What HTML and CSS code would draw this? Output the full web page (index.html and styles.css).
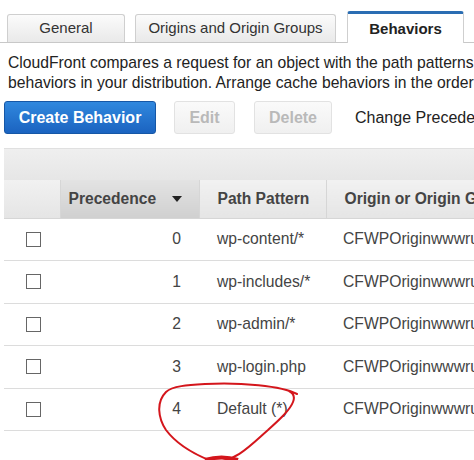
FILE: index.html
```html
<!DOCTYPE html>
<html>
<head>
<meta charset="utf-8">
<link rel="stylesheet" href="styles.css">
</head>
<body>
<div class="page">
  <div class="tabs">
    <div class="tab tab-general">General</div>
    <div class="tab tab-origins">Origins and Origin Groups</div>
    <div class="tab tab-active">Behaviors</div>
  </div>
  <p class="intro">CloudFront compares a request for an object with the path patterns in your cache<br>behaviors in your distribution. Arrange cache behaviors in the order in which you want CloudFront to evaluate them.</p>
  <div class="toolbar">
    <button class="btn btn-primary">Create Behavior</button>
    <button class="btn btn-disabled btn-edit">Edit</button>
    <button class="btn btn-disabled btn-delete">Delete</button>
    <span class="change">Change Precedence</span>
  </div>
  <div class="grid">
    <div class="band"></div>
    <table class="table">
      <thead>
        <tr>
          <th class="col-check"></th>
          <th class="col-prec sorted">Precedence <span class="caret"></span></th>
          <th class="col-path">Path Pattern</th>
          <th class="col-origin">Origin or Origin Groups</th>
        </tr>
      </thead>
      <tbody>
        <tr><td class="col-check"><span class="cb"></span></td><td class="num">0</td><td>wp-content/*</td><td>CFWPOriginwwwrunningwordpress</td></tr>
        <tr><td class="col-check"><span class="cb"></span></td><td class="num">1</td><td>wp-includes/*</td><td>CFWPOriginwwwrunningwordpress</td></tr>
        <tr><td class="col-check"><span class="cb"></span></td><td class="num">2</td><td>wp-admin/*</td><td>CFWPOriginwwwrunningwordpress</td></tr>
        <tr><td class="col-check"><span class="cb"></span></td><td class="num">3</td><td>wp-login.php</td><td>CFWPOriginwwwrunningwordpress</td></tr>
        <tr><td class="col-check"><span class="cb"></span></td><td class="num">4</td><td>Default (*)</td><td>CFWPOriginwwwrunningwordpress</td></tr>
      </tbody>
    </table>
  </div>
  <svg class="scribble" width="474" height="460" viewBox="0 0 474 460">
    <path d="M297,394 C282,386 240,382 205,384 C188,385 172,386 166,392 C156,402 158,418 166,430 C178,446 198,456 214,462 C236,462 252,444 268,430 C280,419 290,410 293,402 C295,397 293,393 289,391" fill="none" stroke="#d4161c" stroke-width="2" stroke-linecap="round"/>
    <path d="M205,460 C215,457 228,457 238,460" fill="none" stroke="#d4161c" stroke-width="4"/>
  </svg>
</div>
</body>
</html>
```
FILE: styles.css
```css
* { box-sizing: border-box; }
html, body { margin: 0; padding: 0; background: #fff; }
body {
  font-family: "Liberation Sans", Arial, sans-serif;
  font-size: 16px;
  color: #222;
  width: 474px;
  height: 460px;
  overflow: hidden;
}
.page { position: relative; width: 474px; height: 460px; overflow: hidden; }

.tabs {
  display: flex;
  align-items: flex-end;
  height: 43px;
  padding-left: 7px;
  border-bottom: 1px solid #c8c8c8;
}
.tab {
  height: 28px;
  line-height: 26px;
  font-size: 15px;
  text-align: center;
  color: #333;
  border: 1px solid #cfcfcf;
  border-bottom: none;
  border-radius: 3px 3px 0 0;
  background: linear-gradient(#fbfbfb, #e9e9e9);
  white-space: nowrap;
  flex: none;
}
.tab-general { width: 118px; margin-right: 10px; }
.tab-origins { width: 201px; margin-right: 11px; }
.tab-active {
  width: 117px;
  height: 32px;
  margin-bottom: -1px;
  line-height: 29px;
  font-weight: bold;
  color: #222;
  background: #fff;
  border-top: 3px solid #2a6db3;
}

.intro {
  margin: 10px 0 0 8px;
  width: 1200px;
  font-size: 15.7px;
  line-height: 20px;
  color: #222;
  white-space: nowrap;
}

.toolbar {
  display: flex;
  align-items: center;
  margin-top: 8px;
  padding-left: 4px;
  height: 33px;
  white-space: nowrap;
}
.btn {
  font-family: inherit;
  font-size: 16px;
  font-weight: bold;
  height: 33px;
  border-radius: 3px;
  padding: 0;
  flex: none;
}
.btn-primary {
  width: 152px;
  color: #fff;
  background: linear-gradient(#3088de, #1b63c0);
  border: 1px solid #1657a6;
}
.btn-disabled {
  color: #b9b9b9;
  background: linear-gradient(#fafafa, #f0f0f0);
  border: 1px solid #e2e2e2;
}
.btn-edit { width: 61px; margin-left: 18px; }
.btn-delete { width: 78px; margin-left: 19px; }
.change { margin-left: 23px; color: #222; }

.grid { margin-top: 14px; margin-left: 4px; width: 600px; }
.band {
  height: 32px;
  background: linear-gradient(#efefef, #e6e6e6);
  border-top: 1px solid #e0e0e0;
}
.table {
  border-collapse: collapse;
  table-layout: fixed;
  width: 600px;
}
.table th {
  height: 38px;
  text-align: left;
  font-weight: bold;
  font-size: 15.6px;
  color: #444;
  padding: 0 0 0 18px;
  background: linear-gradient(#f1f1f1, #e5e5e5);
  border-left: 1px solid #d6d6d6;
  border-bottom: 1px solid #d6d6d6;
  white-space: nowrap;
  overflow: hidden;
}
.table th.col-check { border-left: none; }
.table th.sorted {
  background: linear-gradient(#e3e3e3, #d0d0d0);
  padding-left: 8px;
}
.caret {
  display: inline-block;
  width: 0; height: 0;
  border-left: 5px solid transparent;
  border-right: 5px solid transparent;
  border-top: 6px solid #222;
  margin-left: 12px;
  vertical-align: middle;
  position: relative;
  top: -1px;
}
.col-check { width: 56px; }
.col-prec { width: 139px; }
.col-path { width: 127px; }
.col-origin { width: 278px; }

.table td {
  height: 42.5px;
  color: #444;
  font-size: 15.7px;
  padding: 0 0 0 18px;
  border-bottom: 1px solid #dcdcdc;
  white-space: nowrap;
  overflow: hidden;
}
.table td.col-check { padding: 0 0 0 22px; }
.table td.num { text-align: right; padding: 0 18px 0 0; }
.table td:nth-child(3) { padding-left: 18px; }
.table td:nth-child(4) { padding-left: 17px; }
.cb {
  display: block;
  width: 15px;
  height: 15px;
  border: 1px solid #666;
  background: #fff;
}

.scribble { position: absolute; left: 0; top: 0; pointer-events: none; }
```
